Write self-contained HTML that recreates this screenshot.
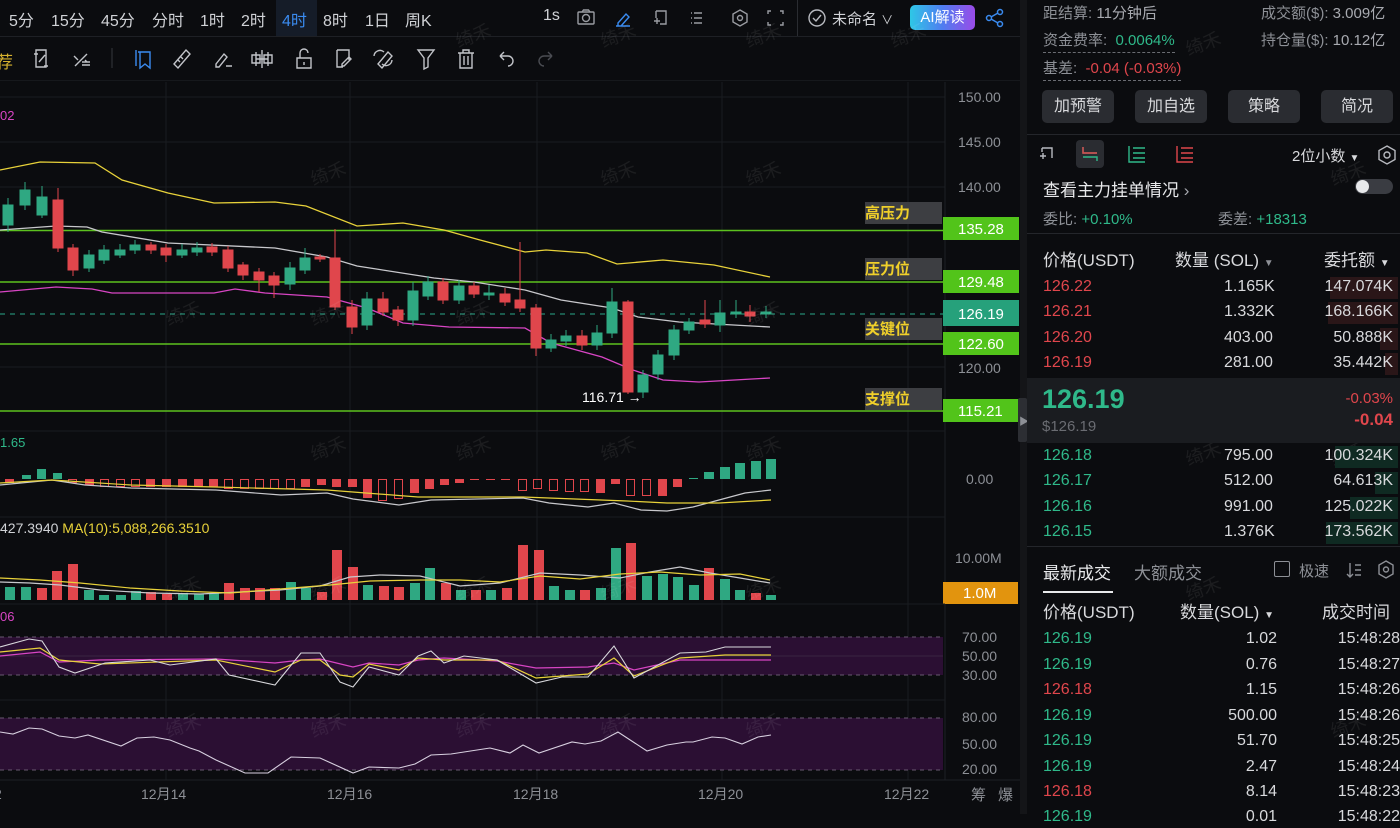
<!DOCTYPE html>
<html><head><meta charset="utf-8">
<style>
*{margin:0;padding:0;box-sizing:border-box}
body{width:1400px;height:814px;background:#0b0c0f;overflow:hidden;position:relative;font-family:"Liberation Sans","Noto Sans CJK SC",sans-serif;color:#c9cbd0}
.a{position:absolute;white-space:nowrap}
.tb{font-size:16px;color:#d0d2d6;top:7px}
.g{color:#2fb98a}.r{color:#e0464c}
.rp{font-size:15px}
.btn{position:absolute;top:90px;height:33px;width:72px;background:#2a2c31;border-radius:5px;color:#d8d9dc;font-size:16px;text-align:center;line-height:33px}
.row{position:absolute;left:1043px;width:350px;height:20px;font-size:16px}
.row span{position:absolute}
.wm{position:absolute;color:rgba(255,255,255,0.07);font-size:18px;transform:rotate(-20deg)}
</style></head><body>

<!-- top toolbar -->
<div class="a tb" style="left:9px">5分</div>
<div class="a tb" style="left:51px">15分</div>
<div class="a tb" style="left:101px">45分</div>
<div class="a tb" style="left:152px">分时</div>
<div class="a tb" style="left:200px">1时</div>
<div class="a tb" style="left:241px">2时</div>
<div class="a" style="left:276px;top:0;width:41px;height:36px;background:#151c28"></div>
<div class="a tb" style="left:282px;color:#3a8bf0">4时</div>
<div class="a tb" style="left:323px">8时</div>
<div class="a tb" style="left:365px">1日</div>
<div class="a tb" style="left:405px">周K</div>
<div class="a tb" style="left:543px">1s</div>
<svg class="a" style="left:570px;top:6px" width="220" height="24" fill="none" stroke-width="1.4">
 <g stroke="#9a9ca2"><rect x="8" y="6" width="16" height="12" rx="1"/><circle cx="16" cy="12" r="3.5"/><path d="M12 6l1.5-2h5L20 6"/></g>
 <path d="M48 17l8-9 3 3-8 9h-3zM46 20h14" stroke="#3a8bf0"/>
 <g stroke="#9a9ca2"><path d="M86 5h10v13h-6M86 5v7M84 15h6M87 12v6"/><path d="M124 7h8M124 12h8M124 17h8M121 7h1M121 12h1M121 17h1"/><path d="M170 4l7 4v8l-7 4-7-4V8z"/><circle cx="170" cy="12" r="2.5"/><path d="M201 5h-3v3M210 5h3v3M201 19h-3v-3M210 19h3v-3"/></g>
</svg>
<div class="a" style="left:797px;top:0;width:1px;height:36px;background:#2a2c31"></div>
<svg class="a" style="left:807px;top:8px" width="22" height="20" fill="none" stroke="#b8bac0" stroke-width="1.4"><circle cx="10" cy="10" r="8"/><path d="M6 10l3 3 5-6"/></svg>
<div class="a tb" style="left:832px;font-size:15px;top:8px">未命名 <span style="font-size:12px">∨</span></div>
<div class="a" style="left:910px;top:5px;width:65px;height:25px;border-radius:5px;background:linear-gradient(90deg,#2ec7e6,#4f7df0,#9a4be8);color:#fff;font-size:15px;text-align:center;line-height:25px">AI解读</div>
<svg class="a" style="left:985px;top:8px" width="20" height="20" fill="none" stroke="#3a8bf0" stroke-width="1.5"><circle cx="15" cy="4" r="2.5"/><circle cx="4" cy="10" r="2.5"/><circle cx="15" cy="16" r="2.5"/><path d="M6 9l7-4M6 11l7 4"/></svg>
<div class="a" style="left:0;top:36px;width:1022px;height:1px;background:#1e2025"></div>

<!-- second toolbar -->
<div class="a" style="left:-4px;top:48px;font-size:17px;color:#d6b12e">荐</div>
<svg class="a" style="left:30px;top:46px" width="540" height="26" fill="none" stroke="#c2c4c9" stroke-width="1.4">
 <path d="M6 4h10v17H6zM9 16l6-7M4 8h4M14 20h4"/>
 <path d="M45 20l12-12M44 10l4 4M52 16h8M52 19h8M55 14l2 2"/>
 <path d="M82 2v20" stroke="#2a2c31"/>
 <path d="M106 4v16M108 6h12v16l-5-4-5 4V6" stroke="#3a8bf0"/>
 <path d="M144 18l12-14 4 4-12 14zM148 14l2 2M151 11l2 2"/>
 <path d="M186 18l8-10 3 3-8 10h-3zM196 20h6"/>
 <path d="M226 6v14M232 4v18M238 6v14M226 13h12M222 9h8v8h-8zM234 9h8v8h-8z"/>
 <path d="M267 12h14v10h-14zM270 12V7a4 4 0 018 0M274 16v3"/>
 <path d="M307 4h12v10M307 4v17h6M312 18l7-7 2 2-7 7h-2z"/>
 <path d="M348 18l10-12 4 4-10 12zM344 10a6 6 0 0110-4M362 14a6 6 0 01-10 4"/>
 <path d="M388 4h16l-6 8v9l-4 2V12z"/>
 <path d="M428 7h16M433 7V4h6v3M430 7v15h12V7M434 10v9M438 10v9"/>
 <path d="M470 10h8a5 5 0 010 10M470 10l4-4M470 10l4 4"/>
 <path d="M522 10h-8a5 5 0 000 10M522 10l-4-4M522 10l-4 4" stroke="#4a4c52"/>
</svg>
<div class="a" style="left:0;top:80px;width:1022px;height:1px;background:#16181c"></div>

<!-- main chart svg -->
<svg class="a" style="left:0;top:0" width="1022" height="814">
 <g stroke="#1a1c20" stroke-width="1">
  <path d="M166 82V780M350 82V780M537 82V780M722 82V780M908 82V780"/>
  <path d="M0 97H945M0 142H945M0 187H945M0 367H945"/>
 </g>
 <line x1="945" y1="82" x2="945" y2="780" stroke="#1e2025"/>
 <!-- level lines -->
 <g stroke="#5cc11f" stroke-width="1.5">
  <path d="M0 230.5H945M0 282H945M0 344H945M0 411H945"/>
 </g>
 <path d="M0 314H945" stroke="#2aa98a" stroke-dasharray="5,5"/>
 <!-- bollinger -->
 <polyline fill="none" stroke="#e8d23a" stroke-width="1.3" points="0,170 40,162 95,163 122,180 168,193 214,203 275,202 306,206 357,226 403,223 444,230 480,240 525,252 546,250 587,253 617,264 663,260 714,265 770,277"/>
 <polyline fill="none" stroke="#c8c8cc" stroke-width="1.3" points="0,230 56,226 87,227 102,232 168,243 275,248 327,257 357,266 434,278 474,282 525,290 561,300 612,308 638,317 679,322 770,327"/>
 <polyline fill="none" stroke="#d845c4" stroke-width="1.3" points="0,292 56,287 92,289 112,293 214,293 235,289 265,293 327,297 367,308 403,323 449,327 525,328 551,343 602,357 633,370 663,380 699,382 770,378"/>
 <!-- candles -->
 <g stroke-width="1">
 <g fill="#2fa882" stroke="#2fa882">
  <path d="M8 198V232M25 182V210M42 186V218M89 250V272M104 245V264M120 244V258M135 240V254M182 244V258M197 242V256M290 262V290M305 248V274M367 292V330M413 282V326M428 276V300M459 280V304M489 285V300M551 334V352M566 330V346M597 325V350M612 288V338M643 370V398M658 350V380M674 325V360M689 318V334M720 300V332M736 300V318M766 306V318"/>
  <rect x="3" y="205" width="10" height="20"/><rect x="20" y="190" width="10" height="15"/><rect x="37" y="197" width="10" height="18"/>
  <rect x="84" y="255" width="10" height="13"/><rect x="99" y="250" width="10" height="10"/><rect x="115" y="250" width="10" height="5"/><rect x="130" y="245" width="10" height="5"/>
  <rect x="177" y="250" width="10" height="5"/><rect x="192" y="248" width="10" height="4"/><rect x="285" y="268" width="10" height="16"/><rect x="300" y="258" width="10" height="12"/>
  <rect x="362" y="299" width="10" height="26"/><rect x="408" y="291" width="10" height="29"/><rect x="423" y="282" width="10" height="14"/><rect x="454" y="286" width="10" height="14"/>
  <rect x="484" y="293" width="10" height="2"/><rect x="546" y="340" width="10" height="8"/><rect x="561" y="336" width="10" height="5"/><rect x="592" y="333" width="10" height="12"/>
  <rect x="607" y="302" width="10" height="31"/><rect x="638" y="375" width="10" height="17"/><rect x="653" y="355" width="10" height="19"/><rect x="669" y="330" width="10" height="25"/>
  <rect x="684" y="322" width="10" height="8"/><rect x="715" y="313" width="10" height="12"/><rect x="731" y="312" width="10" height="2"/><rect x="761" y="312" width="10" height="2"/>
 </g>
 <g fill="#e0464c" stroke="#e0464c">
  <path d="M58 188V252M73 244V276M151 242V254M166 244V262M212 243V256M228 246V272M243 262V280M259 268V292M274 272V298M320 254V262M335 229V310M352 300V334M383 292V316M398 306V326M443 278V304M474 282V298M505 288V306M520 242V312M536 304V356M582 330V350M628 300V394M705 300V328M750 305V322"/>
  <rect x="53" y="200" width="10" height="48"/><rect x="68" y="248" width="10" height="22"/><rect x="146" y="245" width="10" height="5"/><rect x="161" y="248" width="10" height="7"/>
  <rect x="207" y="247" width="10" height="5"/><rect x="223" y="250" width="10" height="18"/><rect x="238" y="265" width="10" height="10"/><rect x="254" y="272" width="10" height="8"/>
  <rect x="269" y="276" width="10" height="9"/><rect x="315" y="257" width="10" height="2"/><rect x="330" y="258" width="10" height="49"/><rect x="347" y="307" width="10" height="20"/>
  <rect x="378" y="299" width="10" height="13"/><rect x="393" y="310" width="10" height="10"/><rect x="438" y="282" width="10" height="18"/><rect x="469" y="286" width="10" height="8"/>
  <rect x="500" y="294" width="10" height="8"/><rect x="515" y="300" width="10" height="8"/><rect x="531" y="308" width="10" height="40"/><rect x="577" y="336" width="10" height="9"/>
  <rect x="623" y="302" width="10" height="90"/><rect x="700" y="320" width="10" height="4"/><rect x="745" y="312" width="10" height="4"/>
 </g>
 </g>
 <text x="582" y="402" fill="#fff" font-size="14" font-family="Liberation Sans">116.71 →</text>
 <text x="0" y="120" fill="#d845c4" font-size="13" font-family="Liberation Sans">02</text>

 <!-- right axis labels -->
 <g fill="#8d9096" font-size="14" font-family="Liberation Sans">
  <text x="958" y="102">150.00</text><text x="958" y="147">145.00</text><text x="958" y="192">140.00</text><text x="958" y="373">120.00</text>
  <text x="966" y="484">0.00</text><text x="955" y="563">10.00M</text>
  <text x="962" y="642">70.00</text><text x="962" y="661">50.00</text><text x="962" y="680">30.00</text>
  <text x="962" y="722">80.00</text><text x="962" y="749">50.00</text><text x="962" y="774">20.00</text>
 </g>
 <g font-family="Liberation Sans,Noto Sans CJK SC" font-weight="bold" font-size="15" fill="#f0d02a">
  <rect x="865" y="202" width="77" height="22" fill="#3d3e42"/><text x="865" y="218">高压力</text>
  <rect x="865" y="258" width="77" height="22" fill="#3d3e42"/><text x="865" y="274">压力位</text>
  <rect x="865" y="318" width="77" height="22" fill="#3d3e42"/><text x="865" y="334">关键位</text>
  <rect x="865" y="388" width="77" height="22" fill="#3d3e42"/><text x="865" y="404">支撑位</text>
 </g>
 <g font-family="Liberation Sans" font-size="15" fill="#fff">
  <rect x="943" y="217" width="76" height="23" fill="#52c41a"/><text x="958" y="234">135.28</text>
  <rect x="943" y="270" width="76" height="23" fill="#52c41a"/><text x="958" y="287">129.48</text>
  <rect x="943" y="300" width="76" height="26" fill="#26a17b"/><text x="958" y="319">126.19</text>
  <rect x="943" y="332" width="76" height="23" fill="#52c41a"/><text x="958" y="349">122.60</text>
  <rect x="943" y="399" width="76" height="23" fill="#52c41a"/><text x="958" y="416">115.21</text>
  <rect x="943" y="582" width="75" height="22" fill="#e2940e"/><text x="963" y="598">1.0M</text>
 </g>

 <!-- MACD -->
 <line x1="0" y1="431" x2="945" y2="431" stroke="#1a1c20"/>
 <text x="0" y="447" fill="#2fb98a" font-size="13" font-family="Liberation Sans">1.65</text>
 <g id="macd"></g>
 <g stroke-width="1">
  <g fill="#2fa882"><rect x="22" y="475" width="9" height="4"/><rect x="37" y="469" width="9" height="10"/><rect x="53" y="473" width="9" height="6"/><rect x="689" y="478" width="9" height="1"/><rect x="704" y="472" width="10" height="7"/><rect x="720" y="467" width="10" height="12"/><rect x="735" y="463" width="10" height="16"/><rect x="751" y="461" width="10" height="18"/><rect x="766" y="459" width="10" height="20"/></g>
  <g fill="#e0464c"><rect x="5" y="479" width="9" height="4"/><rect x="85" y="479" width="9" height="6"/><rect x="146" y="479" width="9" height="8"/><rect x="162" y="479" width="9" height="8"/><rect x="178" y="479" width="9" height="8"/><rect x="194" y="479" width="9" height="8"/><rect x="209" y="479" width="9" height="8"/><rect x="301" y="479" width="9" height="8"/><rect x="317" y="479" width="9" height="6"/><rect x="332" y="479" width="9" height="8"/><rect x="348" y="479" width="9" height="8"/><rect x="363" y="479" width="9" height="19"/><rect x="440" y="479" width="9" height="6"/><rect x="455" y="479" width="9" height="4"/><rect x="470" y="479" width="9" height="1"/><rect x="501" y="479" width="9" height="1"/><rect x="410" y="479" width="9" height="14"/><rect x="425" y="479" width="9" height="10"/><rect x="486" y="479" width="9" height="1"/><rect x="518" y="479" width="9" height="1"/><rect x="596" y="479" width="9" height="14"/><rect x="611" y="479" width="9" height="5"/><rect x="673" y="479" width="9" height="8"/><rect x="658" y="479" width="9" height="17"/></g>
  <g fill="none" stroke="#e0464c"><rect x="68.5" y="479.5" width="8" height="3"/><rect x="100.5" y="479.5" width="8" height="7"/><rect x="116.5" y="479.5" width="8" height="7"/><rect x="131.5" y="479.5" width="8" height="7"/><rect x="224.5" y="479.5" width="8" height="9"/><rect x="240.5" y="479.5" width="8" height="9"/><rect x="255.5" y="479.5" width="8" height="9"/><rect x="270.5" y="479.5" width="8" height="9"/><rect x="286.5" y="479.5" width="8" height="9"/><rect x="378.5" y="479.5" width="8" height="21"/><rect x="394.5" y="479.5" width="8" height="19"/><rect x="533.5" y="479.5" width="8" height="9"/><rect x="549.5" y="479.5" width="8" height="11"/><rect x="565.5" y="479.5" width="8" height="12"/><rect x="580.5" y="479.5" width="8" height="12"/><rect x="626.5" y="479.5" width="8" height="16"/><rect x="642.5" y="479.5" width="8" height="16"/><rect x="518.5" y="479.5" width="8" height="11"/></g>
 </g>
 <polyline fill="none" stroke="#c8c8cc" stroke-width="1.2" points="0,485 52,480 85,485 131,488 216,490 281,495 327,493 353,499 399,505 431,500 523,498 549,503 588,507 614,503 641,510 667,511 693,507 719,500 745,493 771,490"/>
 <polyline fill="none" stroke="#e8d23a" stroke-width="1.2" points="0,483 52,480 131,485 216,487 327,490 418,497 523,497 627,501 667,503 719,503 771,500"/>

 <!-- volume -->
 <line x1="0" y1="517" x2="945" y2="517" stroke="#1a1c20"/>
 <text x="0" y="533" font-size="14" font-family="Liberation Sans"><tspan fill="#d0d2d6">427.3940 </tspan><tspan fill="#e8d23a">MA(10):5,088,266.3510</tspan></text>
 <g fill="#2fa882">
  <rect x="5" y="587" width="10" height="13"/><rect x="21" y="587" width="10" height="13"/><rect x="84" y="590" width="10" height="10"/><rect x="99" y="595" width="10" height="5"/><rect x="116" y="595" width="10" height="5"/><rect x="131" y="591" width="10" height="9"/><rect x="178" y="593" width="10" height="7"/><rect x="194" y="594" width="10" height="6"/><rect x="209" y="593" width="10" height="7"/><rect x="286" y="582" width="10" height="18"/><rect x="301" y="588" width="10" height="12"/><rect x="363" y="585" width="10" height="15"/><rect x="410" y="583" width="10" height="17"/><rect x="425" y="568" width="10" height="32"/><rect x="456" y="590" width="10" height="10"/><rect x="486" y="590" width="10" height="10"/><rect x="549" y="586" width="10" height="14"/><rect x="565" y="590" width="10" height="10"/><rect x="596" y="588" width="10" height="12"/><rect x="611" y="548" width="10" height="52"/><rect x="642" y="576" width="10" height="24"/><rect x="658" y="574" width="10" height="26"/><rect x="673" y="577" width="10" height="23"/><rect x="689" y="585" width="10" height="15"/><rect x="720" y="579" width="10" height="21"/><rect x="735" y="590" width="10" height="10"/><rect x="766" y="595" width="10" height="5"/>
 </g>
 <g fill="#e0464c">
  <rect x="37" y="588" width="10" height="12"/><rect x="52" y="571" width="10" height="29"/><rect x="68" y="564" width="10" height="36"/><rect x="146" y="592" width="10" height="8"/><rect x="162" y="594" width="10" height="6"/><rect x="224" y="583" width="10" height="17"/><rect x="240" y="588" width="10" height="12"/><rect x="255" y="588" width="10" height="12"/><rect x="270" y="588" width="10" height="12"/><rect x="317" y="592" width="10" height="8"/><rect x="332" y="550" width="10" height="50"/><rect x="348" y="567" width="10" height="33"/><rect x="379" y="586" width="10" height="14"/><rect x="394" y="587" width="10" height="13"/><rect x="441" y="583" width="10" height="17"/><rect x="471" y="590" width="10" height="10"/><rect x="502" y="588" width="10" height="12"/><rect x="518" y="545" width="10" height="55"/><rect x="534" y="550" width="10" height="50"/><rect x="580" y="590" width="10" height="10"/><rect x="626" y="543" width="10" height="57"/><rect x="704" y="568" width="10" height="32"/><rect x="751" y="593" width="10" height="7"/>
 </g>
 <polyline fill="none" stroke="#c8c8cc" stroke-width="1.2" points="0,582 30,583 60,585 100,590 150,593 200,594 240,592 280,590 320,586 350,577 380,575 420,576 460,586 500,583 540,573 580,575 620,578 650,572 680,567 710,573 740,578 770,583"/>
 <polyline fill="none" stroke="#e8d23a" stroke-width="1.2" points="0,578 40,580 80,583 130,588 180,591 230,593 280,589 330,585 370,581 420,580 460,580 500,582 540,576 580,579 620,574 660,572 700,575 740,574 770,580"/>

 <!-- RSI -->
 <line x1="0" y1="604" x2="945" y2="604" stroke="#1a1c20"/>
 <text x="0" y="621" fill="#d845c4" font-size="13" font-family="Liberation Sans">06</text>
 <rect x="0" y="637" width="943" height="38" fill="#2b0f33"/>
 <path d="M0 637H943M0 675H943" stroke="#6a5a70" stroke-dasharray="4,4"/>
 <path d="M0 656H943" stroke="#3a2540"/>
 <polyline fill="none" stroke="#d845c4" stroke-width="1.2" points="0,656 40,652 59,662 100,660 216,659 275,663 301,660 320,659 353,667 369,663 399,665 418,660 444,658 497,661 536,668 588,667 614,663 634,670 680,660 725,660 771,660"/>
 <polyline fill="none" stroke="#e8d23a" stroke-width="1.2" points="0,652 40,648 59,660 100,664 216,660 275,672 301,660 320,660 340,675 353,677 369,664 399,670 418,658 444,660 497,660 536,678 588,674 614,658 634,676 680,658 725,655 771,655"/>
 <polyline fill="none" stroke="#d8d8dc" stroke-width="1.1" points="0,647 29,639 42,641 59,667 75,673 105,663 150,660 170,665 216,659 229,675 275,685 301,653 320,653 340,682 353,687 369,667 399,675 418,656 431,651 444,663 464,656 497,660 536,683 562,677 588,677 614,646 634,678 680,653 706,652 725,647 771,647"/>

 <!-- bottom osc -->
 <line x1="0" y1="700" x2="945" y2="700" stroke="#1a1c20"/>
 <rect x="0" y="718" width="943" height="52" fill="#2b0f33"/>
 <path d="M0 718H943M0 770H943" stroke="#6a5a70" stroke-dasharray="4,4"/>
 <polyline fill="none" stroke="#d8d0e0" stroke-width="1.1" points="0,732 13,734 29,728 42,729 59,736 75,738 88,735 121,746 137,738 154,737 170,740 190,748 199,751 216,760 245,773 268,773 291,757 320,758 353,773 369,767 399,768 415,764 431,755 451,754 490,748 510,753 523,745 539,753 572,742 585,744 601,741 618,732 647,751 667,745 686,742 693,742 712,737 725,738 742,744 758,737 771,735"/>

 <!-- date axis -->
 <line x1="0" y1="780" x2="1022" y2="780" stroke="#1e2025"/>
 <g fill="#8d9096" font-size="14" font-family="Liberation Sans,Noto Sans CJK SC">
  <text x="-6" y="799">2</text><text x="141" y="799">12月14</text><text x="327" y="799">12月16</text><text x="513" y="799">12月18</text><text x="698" y="799">12月20</text><text x="884" y="799">12月22</text>
  <text x="971" y="800" font-size="15">筹</text><text x="998" y="800" font-size="15">爆</text>
 </g>
</svg>

<!-- divider -->
<div class="a" style="left:1020px;top:0;width:7px;height:814px;background:#141518"></div>
<div class="a" style="left:1018px;top:398px;width:9px;height:44px;background:#2c2e33;border-radius:2px"></div>
<div class="a" style="left:1019px;top:413px;font-size:10px;color:#8d9096">▶</div>

<!-- watermarks -->
<div class="wm" style="left:455px;top:22px">绮禾</div><div class="wm" style="left:600px;top:22px">绮禾</div><div class="wm" style="left:745px;top:22px">绮禾</div><div class="wm" style="left:890px;top:22px">绮禾</div>
<div class="wm" style="left:310px;top:160px">绮禾</div><div class="wm" style="left:600px;top:160px">绮禾</div><div class="wm" style="left:745px;top:160px">绮禾</div>
<div class="wm" style="left:165px;top:300px">绮禾</div><div class="wm" style="left:310px;top:300px">绮禾</div><div class="wm" style="left:455px;top:300px">绮禾</div><div class="wm" style="left:745px;top:300px">绮禾</div>
<div class="wm" style="left:310px;top:435px">绮禾</div><div class="wm" style="left:455px;top:435px">绮禾</div><div class="wm" style="left:600px;top:435px">绮禾</div><div class="wm" style="left:745px;top:435px">绮禾</div>
<div class="wm" style="left:165px;top:575px">绮禾</div><div class="wm" style="left:310px;top:575px">绮禾</div><div class="wm" style="left:455px;top:575px">绮禾</div><div class="wm" style="left:600px;top:575px">绮禾</div><div class="wm" style="left:745px;top:575px">绮禾</div>
<div class="wm" style="left:165px;top:712px">绮禾</div><div class="wm" style="left:310px;top:712px">绮禾</div><div class="wm" style="left:455px;top:712px">绮禾</div><div class="wm" style="left:600px;top:712px">绮禾</div><div class="wm" style="left:745px;top:712px">绮禾</div>
<div class="wm" style="left:1185px;top:30px">绮禾</div><div class="wm" style="left:1330px;top:160px">绮禾</div><div class="wm" style="left:1185px;top:440px">绮禾</div><div class="wm" style="left:1330px;top:440px">绮禾</div><div class="wm" style="left:1185px;top:575px">绮禾</div><div class="wm" style="left:1330px;top:712px">绮禾</div>

<!-- right panel -->
<div class="a rp" style="left:1043px;top:2px;color:#8d9096">距结算: <span style="color:#a8aab0">11分钟后</span></div>
<div class="a rp" style="left:1261px;top:2px;color:#8d9096">成交额($): <span style="color:#a8aab0">3.009亿</span></div>
<div class="a rp" style="left:1043px;top:29px;color:#8d9096;border-bottom:1px dashed #6a6c72;padding-bottom:2px">资金费率: <span class="g">&nbsp;0.0064%</span></div>
<div class="a rp" style="left:1261px;top:29px;color:#8d9096">持仓量($): <span style="color:#a8aab0">10.12亿</span></div>
<div class="a rp" style="left:1043px;top:57px;color:#8d9096;border-bottom:1px dashed #6a6c72;padding-bottom:2px">基差: <span class="r">&nbsp;-0.04 (-0.03%)</span></div>
<div class="btn" style="left:1042px">加预警</div><div class="btn" style="left:1135px">加自选</div><div class="btn" style="left:1228px">策略</div><div class="btn" style="left:1321px">简况</div>
<div class="a" style="left:1027px;top:134px;width:373px;height:1px;background:#24262b"></div>
<svg class="a" style="left:1036px;top:140px" width="170" height="28" fill="none" stroke-width="1.4">
 <path d="M6 8h10v10M6 8v4M4 16h6M7 13v6" stroke="#b8bac0"/>
 <rect x="40" y="0" width="28" height="28" rx="4" fill="#2a2c31" stroke="none"/>
 <path d="M47 7v6h14M47 17h14v4" stroke="#2fb98a"/><path d="M47 7v6h14" stroke="#e0464c"/>
 <path d="M93 6v16h16M97 8h12M97 13h12M97 18h12" stroke="#2fb98a"/>
 <path d="M141 6v16h16M145 8h12M145 13h12M145 18h12" stroke="#e0464c"/>
</svg>
<div class="a" style="left:1292px;top:145px;font-size:15px;color:#d8d9dc">2位小数 <span style="font-size:10px">▼</span></div>
<svg class="a" style="left:1377px;top:145px" width="20" height="20" fill="none" stroke="#b8bac0" stroke-width="1.4"><path d="M10 1l8 4.5v9L10 19l-8-4.5v-9z"/><circle cx="10" cy="10" r="3"/></svg>
<div class="a" style="left:1043px;top:176px;font-size:17px;color:#e8e9eb">查看主力挂单情况 <span style="color:#a8aab0">›</span></div>
<div class="a" style="left:1355px;top:179px;width:38px;height:15px;border-radius:8px;background:#3a3c42"></div>
<div class="a" style="left:1356px;top:180px;width:13px;height:13px;border-radius:50%;background:#e8e9eb"></div>
<div class="a rp" style="left:1043px;top:208px;color:#8d9096">委比: <span class="g">+0.10%</span></div>
<div class="a rp" style="left:1218px;top:208px;color:#8d9096">委差: <span class="g">+18313</span></div>
<div class="a" style="left:1027px;top:233px;width:373px;height:1px;background:#24262b"></div>
<div class="a" style="left:1043px;top:246px;font-size:17px;color:#d8d9dc">价格(USDT)</div>
<div class="a" style="left:1175px;top:246px;font-size:17px;color:#d8d9dc">数量 (SOL) <span style="font-size:10px;color:#8d9096">▼</span></div>
<div class="a" style="left:1324px;top:246px;font-size:17px;color:#d8d9dc">委托额 <span style="font-size:10px">▼</span></div>

<div class="a" style="left:1330px;top:277px;width:68px;height:22px;background:#2a1618"></div>
<div class="a" style="left:1328px;top:302px;width:70px;height:22px;background:#2a1618"></div>
<div class="a" style="left:1380px;top:328px;width:18px;height:22px;background:#2a1618"></div>
<div class="a" style="left:1385px;top:353px;width:13px;height:22px;background:#2a1618"></div>
<div class="row" style="top:278px"><span class="r">126.22</span><span style="left:181px;color:#d8d9dc">1.165K</span><span style="right:0;color:#d8d9dc">147.074K</span></div>
<div class="row" style="top:303px"><span class="r">126.21</span><span style="left:181px;color:#d8d9dc">1.332K</span><span style="right:0;color:#d8d9dc">168.166K</span></div>
<div class="row" style="top:329px"><span class="r">126.20</span><span style="left:181px;color:#d8d9dc">403.00</span><span style="right:0;color:#d8d9dc">50.888K</span></div>
<div class="row" style="top:354px"><span class="r">126.19</span><span style="left:181px;color:#d8d9dc">281.00</span><span style="right:0;color:#d8d9dc">35.442K</span></div>

<div class="a" style="left:1027px;top:378px;width:373px;height:65px;background:#1a1c20"></div>
<div class="a" style="left:1042px;top:384px;font-size:27px;font-weight:bold" ><span class="g">126.19</span></div>
<div class="a" style="left:1042px;top:418px;font-size:15px;color:#6a6c72">$126.19</div>
<div class="a" style="right:7px;top:390px;font-size:15px" ><span class="r">-0.03%</span></div>
<div class="a" style="right:7px;top:410px;font-size:17px;font-weight:bold"><span class="r">-0.04</span></div>

<div class="a" style="left:1335px;top:446px;width:63px;height:22px;background:#0f2a22"></div>
<div class="a" style="left:1375px;top:472px;width:23px;height:22px;background:#0f2a22"></div>
<div class="a" style="left:1350px;top:497px;width:48px;height:22px;background:#0f2a22"></div>
<div class="a" style="left:1326px;top:522px;width:72px;height:22px;background:#0f2a22"></div>
<div class="row" style="top:447px"><span class="g">126.18</span><span style="left:181px;color:#d8d9dc">795.00</span><span style="right:0;color:#d8d9dc">100.324K</span></div>
<div class="row" style="top:472px"><span class="g">126.17</span><span style="left:181px;color:#d8d9dc">512.00</span><span style="right:0;color:#d8d9dc">64.613K</span></div>
<div class="row" style="top:498px"><span class="g">126.16</span><span style="left:181px;color:#d8d9dc">991.00</span><span style="right:0;color:#d8d9dc">125.022K</span></div>
<div class="row" style="top:523px"><span class="g">126.15</span><span style="left:181px;color:#d8d9dc">1.376K</span><span style="right:0;color:#d8d9dc">173.562K</span></div>
<div class="a" style="left:1027px;top:546px;width:373px;height:1px;background:#24262b"></div>

<div class="a" style="left:1043px;top:559px;font-size:17px;color:#e8e9eb">最新成交</div>
<div class="a" style="left:1043px;top:591px;width:70px;height:2px;background:#e8e9eb"></div>
<div class="a" style="left:1134px;top:559px;font-size:17px;color:#8d9096">大额成交</div>
<div class="a" style="left:1274px;top:561px;width:16px;height:16px;border:1.4px solid #8d9096;border-radius:2px"></div>
<div class="a" style="left:1299px;top:560px;font-size:15px;color:#8d9096">极速</div>
<svg class="a" style="left:1344px;top:560px" width="56" height="20" fill="none" stroke="#8d9096" stroke-width="1.4"><path d="M6 3v14M3 14l3 3 3-3M11 5h6M11 10h6M11 15h6"/><path d="M42 1l7 4v9l-7 4-7-4V5z"/><circle cx="42" cy="9.5" r="2.5"/></svg>
<div class="a" style="left:1043px;top:598px;font-size:17px;color:#d8d9dc">价格(USDT)</div>
<div class="a" style="left:1180px;top:598px;font-size:17px;color:#d8d9dc">数量(SOL) <span style="font-size:10px">▼</span></div>
<div class="a" style="left:1322px;top:598px;font-size:17px;color:#d8d9dc">成交时间</div>
<div class="row" style="top:630px"><span class="g">126.19</span><span style="right:116px;color:#d8d9dc">1.02</span><span style="right:-7px;color:#d8d9dc">15:48:28</span></div>
<div class="row" style="top:656px"><span class="g">126.19</span><span style="right:116px;color:#d8d9dc">0.76</span><span style="right:-7px;color:#d8d9dc">15:48:27</span></div>
<div class="row" style="top:681px"><span class="r">126.18</span><span style="right:116px;color:#d8d9dc">1.15</span><span style="right:-7px;color:#d8d9dc">15:48:26</span></div>
<div class="row" style="top:707px"><span class="g">126.19</span><span style="right:116px;color:#d8d9dc">500.00</span><span style="right:-7px;color:#d8d9dc">15:48:26</span></div>
<div class="row" style="top:732px"><span class="g">126.19</span><span style="right:116px;color:#d8d9dc">51.70</span><span style="right:-7px;color:#d8d9dc">15:48:25</span></div>
<div class="row" style="top:758px"><span class="g">126.19</span><span style="right:116px;color:#d8d9dc">2.47</span><span style="right:-7px;color:#d8d9dc">15:48:24</span></div>
<div class="row" style="top:783px"><span class="r">126.18</span><span style="right:116px;color:#d8d9dc">8.14</span><span style="right:-7px;color:#d8d9dc">15:48:23</span></div>
<div class="row" style="top:808px"><span class="g">126.19</span><span style="right:116px;color:#d8d9dc">0.01</span><span style="right:-7px;color:#d8d9dc">15:48:22</span></div>
</body></html>
